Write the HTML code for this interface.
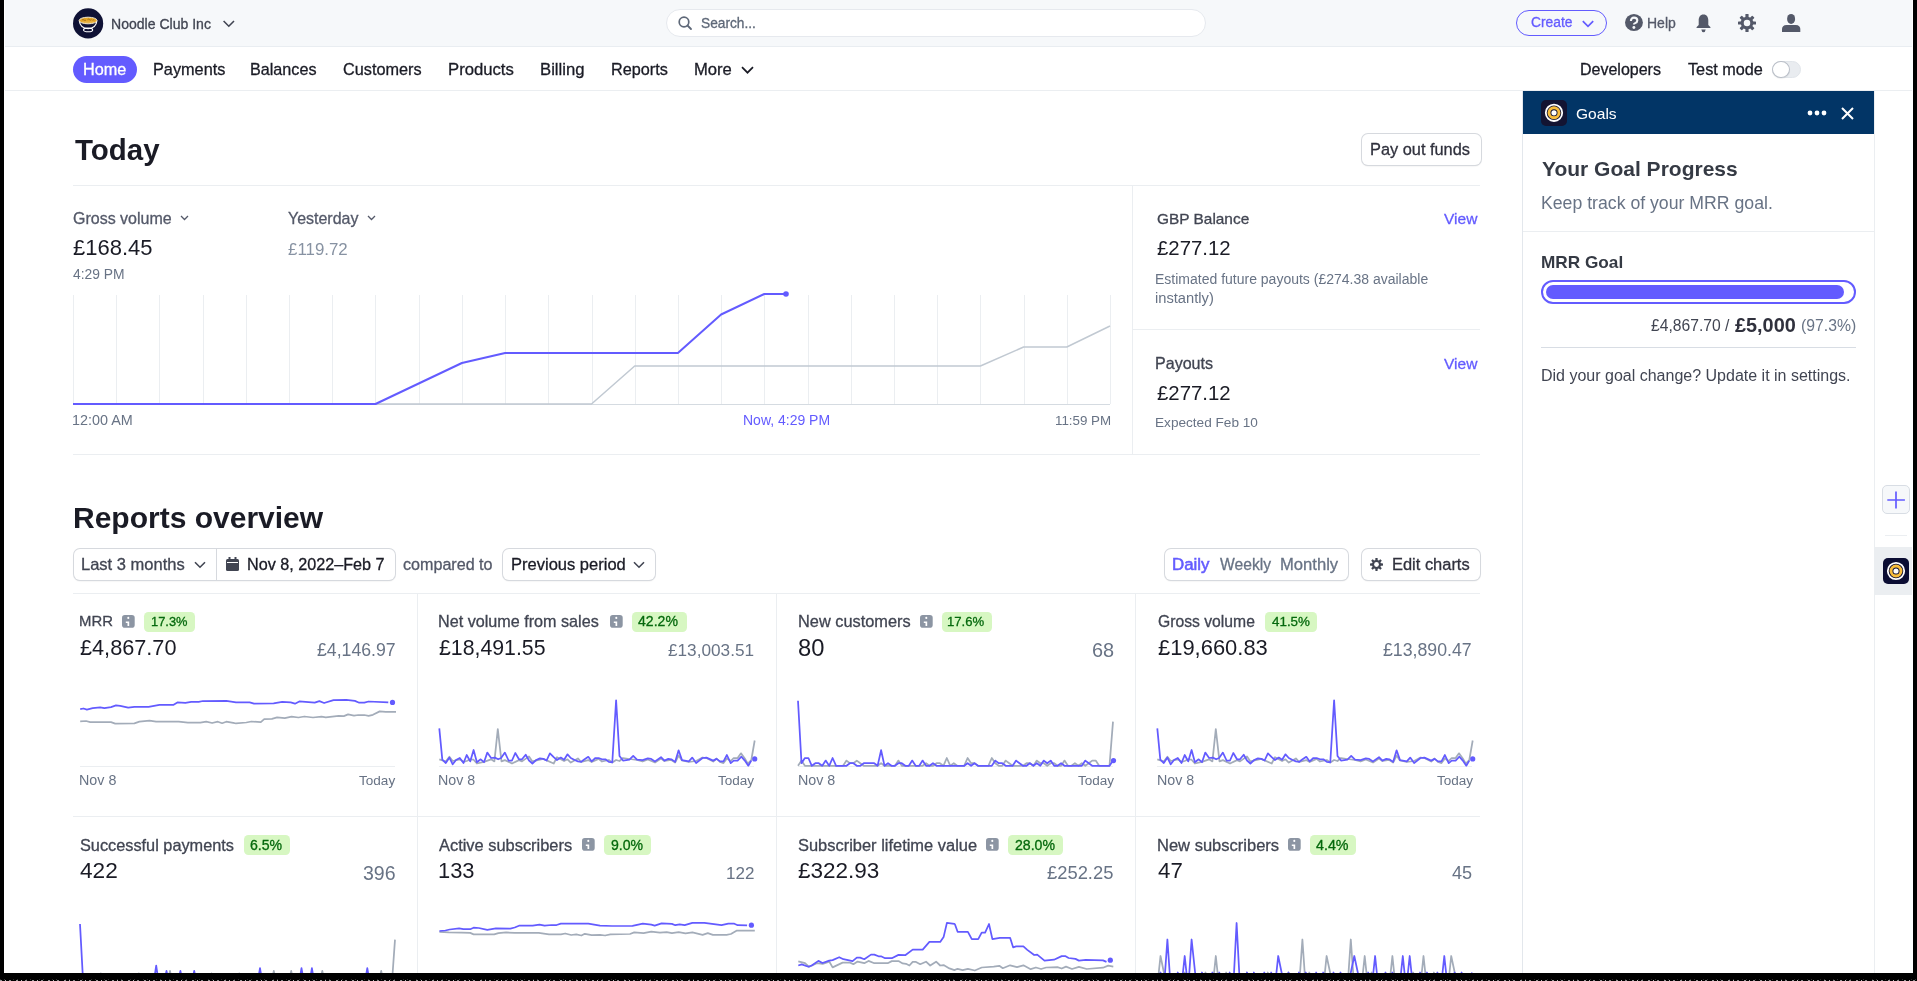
<!DOCTYPE html>
<html><head><meta charset="utf-8">
<style>
*{box-sizing:border-box;margin:0;padding:0}
html,body{width:1917px;height:981px;overflow:hidden;background:#000;font-family:"Liberation Sans",sans-serif;color:#1a1b25}
#app{position:absolute;left:0;top:0;width:1913px;height:973px;background:#fff;overflow:hidden}
.a{position:absolute;white-space:nowrap}
.t{position:absolute;white-space:nowrap;line-height:0;height:0;will-change:transform}
.hl{position:absolute;height:1px;background:#ebeef1}
.vl{position:absolute;width:1px;background:#ebeef1}
svg{position:absolute;overflow:visible}
.bl{display:inline-block;width:0;height:0;vertical-align:baseline}
</style></head><body>
<div id="app">
  <!-- top bar -->
  <div class="a" style="left:5px;top:0;width:1907px;height:46px;background:#f6f8fa"></div>
  <div class="hl" style="left:5px;top:46px;width:1907px;background:#e9edf1"></div>
  <div class="hl" style="left:5px;top:90px;width:1907px;background:#ebeef1"></div>

  <!-- logo -->
  <svg style="left:72.9px;top:8px" width="31" height="31" viewBox="0 0 31 31">
    <circle cx="15.1" cy="15.4" r="15.1" fill="#0f1235"/>
    <path d="M6.3 12.8 Q7.2 20.6 15.1 20.6 Q23 20.6 23.9 12.8" fill="none" stroke="#fff" stroke-width="1.2"/>
    <ellipse cx="15.1" cy="12.5" rx="8.9" ry="3.3" fill="#e5a72a" stroke="#f3ead2" stroke-width="1"/>
    <path d="M9 12 q1 -1 2 0 q1 1 2 0 M14.5 11.6 q1 -1 2 0 q1 1 2 0 M19.5 12.2 q.8 -.8 1.6 0" fill="none" stroke="#8a5a10" stroke-width=".7"/>
    <path d="M9.5 14.2 h11.5" stroke="#f5eedd" stroke-width=".6" stroke-dasharray="1 1"/>
    <ellipse cx="15.1" cy="21.9" rx="4.6" ry="1.8" fill="none" stroke="#fff" stroke-width="1.1"/>
  </svg>
  <svg style="left:222.5px;top:20.3px" width="12" height="8" viewBox="0 0 12 8"><path d="M0.6 1 L5.8 6.2 L11 1" fill="none" stroke="#414552" stroke-width="1.6"/></svg>

  <!-- search -->
  <div class="a" style="left:666px;top:9px;width:540px;height:28px;border:1px solid #e6e9ee;border-radius:14px;background:#fff"></div>
  <svg style="left:678px;top:16px" width="14" height="14" viewBox="0 0 14 14"><circle cx="6" cy="6" r="4.8" fill="none" stroke="#5e6878" stroke-width="1.7"/><path d="M9.5 9.5 L13 13" stroke="#5e6878" stroke-width="1.8" stroke-linecap="round"/></svg>

  <!-- right top -->
  <div class="a" style="left:1516px;top:10px;width:91px;height:26px;border:1px solid #635bff;border-radius:13px"></div>
  <svg style="left:1581.5px;top:19.5px" width="12" height="8" viewBox="0 0 12 8"><path d="M0.8 1.2 L6 6.4 L11.2 1.2" fill="none" stroke="#635bff" stroke-width="1.7"/></svg>
  <svg style="left:1625px;top:14px" width="18" height="18" viewBox="0 0 18 18"><ellipse cx="8.95" cy="8.5" rx="8.95" ry="8.6" fill="#545969"/><path d="M5.9 6.9 C5.9 4.7 7.2 3.6 9 3.6 C10.8 3.6 12.3 4.7 12.3 6.5 C12.3 8.1 11.2 8.7 10.2 9.1 C9.4 9.4 8.9 9.8 8.9 10.6" fill="none" stroke="#f6f8fa" stroke-width="2.1"/><circle cx="8.9" cy="13.5" r="1.45" fill="#f6f8fa"/></svg>
  <svg style="left:1695.5px;top:13.5px" width="15" height="19" viewBox="0 0 15 19"><path d="M7.5 0.6 C10.9 0.6 12.3 3.3 12.3 6.6 V11 L14.3 13 Q14.8 13.5 14.3 14 H0.7 Q0.2 13.5 0.7 13 L2.7 11 V6.6 C2.7 3.3 4.1 0.6 7.5 0.6Z" fill="#545969"/><path d="M5.3 15.6 H9.7 Q9.3 18.3 7.5 18.3 Q5.7 18.3 5.3 15.6Z" fill="#545969"/></svg>
  <svg style="left:1738px;top:14px" width="18" height="18" viewBox="0 0 18 18"><g fill="#545969"><circle cx="9" cy="9" r="6.3"/><rect x="7.4" y="0" width="3.2" height="18" rx=".6"/><rect x="0" y="7.4" width="18" height="3.2" rx=".6"/><rect x="7.4" y="0" width="3.2" height="18" rx=".6" transform="rotate(45 9 9)"/><rect x="7.4" y="0" width="3.2" height="18" rx=".6" transform="rotate(-45 9 9)"/></g><circle cx="9" cy="9" r="3.25" fill="#f6f8fa"/></svg>
  <svg style="left:1782px;top:13px" width="18.5" height="19" viewBox="0 0 18.5 19"><ellipse cx="9.1" cy="5.9" rx="4" ry="5" fill="#545969"/><path d="M0 19 L0 16 Q0 12.2 4.6 11.9 L13.9 11.9 Q18.3 12.2 18.3 16 L18.3 19Z" fill="#545969"/></svg>

  <!-- nav -->
  <div class="a" style="left:73px;top:56px;width:64px;height:27px;border-radius:14px;background:#635bff"></div>
  <svg style="left:741px;top:66px" width="13" height="8" viewBox="0 0 13 8"><path d="M1 1.2 L6.5 6.7 L12 1.2" fill="none" stroke="#1a1b25" stroke-width="1.7"/></svg>
  <div class="a" style="left:1772px;top:61px;width:29px;height:17px;border-radius:9px;background:#e9ecf0;border:1px solid #e1e5ea"></div>
  <div class="a" style="left:1772px;top:61px;width:17.5px;height:17px;border-radius:50%;background:#fff;border:1px solid #b9bec7;box-shadow:0 1px 1px rgba(0,0,0,.06)"></div>

  <!-- TODAY -->
  <div class="a" style="left:1362px;top:134px;width:118.5px;height:30.5px;border-radius:6px;background:#fff;box-shadow:0 0 0 1px #d6d9de,0 1px 1.5px rgba(0,0,0,.16)"></div>
  <div class="hl" style="left:73px;top:185px;width:1407px"></div>
  <div class="vl" style="left:1132px;top:185px;height:269px"></div>
  <div class="hl" style="left:1132px;top:329px;width:348px"></div>
  <div class="hl" style="left:73px;top:454px;width:1407px"></div>
  <svg style="left:180px;top:215px" width="9" height="6" viewBox="0 0 9 6"><path d="M1 1 L4.5 4.5 L8 1" fill="none" stroke="#545969" stroke-width="1.3"/></svg>
  <svg style="left:367px;top:215px" width="9" height="6" viewBox="0 0 9 6"><path d="M1 1 L4.5 4.5 L8 1" fill="none" stroke="#545969" stroke-width="1.3"/></svg>

  <svg id="todaychart" style="left:0;top:0" width="1200" height="460"><line x1="73.5" y1="295" x2="73.5" y2="404" stroke="#ebeef1" stroke-width="1"/>
<line x1="116.5" y1="295" x2="116.5" y2="404" stroke="#ebeef1" stroke-width="1"/>
<line x1="159.5" y1="295" x2="159.5" y2="404" stroke="#ebeef1" stroke-width="1"/>
<line x1="203.5" y1="295" x2="203.5" y2="404" stroke="#ebeef1" stroke-width="1"/>
<line x1="246.5" y1="295" x2="246.5" y2="404" stroke="#ebeef1" stroke-width="1"/>
<line x1="289.5" y1="295" x2="289.5" y2="404" stroke="#ebeef1" stroke-width="1"/>
<line x1="332.5" y1="295" x2="332.5" y2="404" stroke="#ebeef1" stroke-width="1"/>
<line x1="375.5" y1="295" x2="375.5" y2="404" stroke="#ebeef1" stroke-width="1"/>
<line x1="419.5" y1="295" x2="419.5" y2="404" stroke="#ebeef1" stroke-width="1"/>
<line x1="462.5" y1="295" x2="462.5" y2="404" stroke="#ebeef1" stroke-width="1"/>
<line x1="505.5" y1="295" x2="505.5" y2="404" stroke="#ebeef1" stroke-width="1"/>
<line x1="548.5" y1="295" x2="548.5" y2="404" stroke="#ebeef1" stroke-width="1"/>
<line x1="592.5" y1="295" x2="592.5" y2="404" stroke="#ebeef1" stroke-width="1"/>
<line x1="635.5" y1="295" x2="635.5" y2="404" stroke="#ebeef1" stroke-width="1"/>
<line x1="678.5" y1="295" x2="678.5" y2="404" stroke="#ebeef1" stroke-width="1"/>
<line x1="721.5" y1="295" x2="721.5" y2="404" stroke="#ebeef1" stroke-width="1"/>
<line x1="764.5" y1="295" x2="764.5" y2="404" stroke="#ebeef1" stroke-width="1"/>
<line x1="808.5" y1="295" x2="808.5" y2="404" stroke="#ebeef1" stroke-width="1"/>
<line x1="851.5" y1="295" x2="851.5" y2="404" stroke="#ebeef1" stroke-width="1"/>
<line x1="894.5" y1="295" x2="894.5" y2="404" stroke="#ebeef1" stroke-width="1"/>
<line x1="937.5" y1="295" x2="937.5" y2="404" stroke="#ebeef1" stroke-width="1"/>
<line x1="980.5" y1="295" x2="980.5" y2="404" stroke="#ebeef1" stroke-width="1"/>
<line x1="1024.5" y1="295" x2="1024.5" y2="404" stroke="#ebeef1" stroke-width="1"/>
<line x1="1067.5" y1="295" x2="1067.5" y2="404" stroke="#ebeef1" stroke-width="1"/>
<line x1="1110.5" y1="295" x2="1110.5" y2="404" stroke="#ebeef1" stroke-width="1"/>
<line x1="73" y1="404.5" x2="1110" y2="404.5" stroke="#d5dbe1" stroke-width="1"/>
<polyline fill="none" stroke="#c1c9d2" stroke-width="1.5" stroke-linejoin="round" points="73.0,404.0 591.5,404.0 634.7,366.0 980.4,366.0 1023.6,347.0 1066.8,347.0 1110.0,326.0"/>
<polyline fill="none" stroke="#635bff" stroke-width="2" stroke-linejoin="round" points="73.0,404.0 375.5,404.0 461.9,363.0 505.1,353.0 677.9,353.0 721.1,314.5 764.3,294.0 786.0,294.0"/>
<circle cx="786.0" cy="294.0" r="2.8" fill="#635bff"/></svg>

  <!-- REPORTS -->
  <div class="a" style="left:74px;top:549px;width:320.5px;height:30.5px;border-radius:6px;background:#fff;box-shadow:0 0 0 1px #d6d9de,0 1px 1.5px rgba(0,0,0,.16)"></div>
  <div class="vl" style="left:216px;top:549px;height:31px;background:#d6d9de"></div>
  <svg style="left:194px;top:561px" width="12" height="8" viewBox="0 0 12 8"><path d="M1 1.2 L6 6.2 L11 1.2" fill="none" stroke="#414552" stroke-width="1.6"/></svg>
  <svg style="left:226px;top:557px" width="13" height="14" viewBox="0 0 13 14"><rect x="0" y="2" width="13" height="12" rx="1.5" fill="#414552"/><rect x="2.5" y="0" width="2" height="3" fill="#414552"/><rect x="8.5" y="0" width="2" height="3" fill="#414552"/><rect x="1" y="5" width="11" height="1" fill="#fff"/></svg>
  <div class="a" style="left:502.5px;top:549px;width:152px;height:30.5px;border-radius:6px;background:#fff;box-shadow:0 0 0 1px #d6d9de,0 1px 1.5px rgba(0,0,0,.16)"></div>
  <svg style="left:633px;top:561px" width="12" height="8" viewBox="0 0 12 8"><path d="M1 1.2 L6 6.2 L11 1.2" fill="none" stroke="#414552" stroke-width="1.6"/></svg>

  <div class="a" style="left:1165px;top:549px;width:182.5px;height:30.5px;border-radius:6px;background:#fff;box-shadow:0 0 0 1px #d6d9de,0 1px 1.5px rgba(0,0,0,.16)"></div>
  <div class="a" style="left:1361.5px;top:549px;width:118px;height:30.5px;border-radius:6px;background:#fff;box-shadow:0 0 0 1px #d6d9de,0 1px 1.5px rgba(0,0,0,.16)"></div>
  <svg style="left:1370px;top:558px" width="13" height="13" viewBox="0 0 18 18"><g fill="#414552"><circle cx="9" cy="9" r="6.3"/><rect x="7.4" y="0" width="3.2" height="18" rx=".6"/><rect x="0" y="7.4" width="18" height="3.2" rx=".6"/><rect x="7.4" y="0" width="3.2" height="18" rx=".6" transform="rotate(45 9 9)"/><rect x="7.4" y="0" width="3.2" height="18" rx=".6" transform="rotate(-45 9 9)"/></g><circle cx="9" cy="9" r="3.3" fill="#fff"/></svg>

  <div class="hl" style="left:73px;top:593px;width:1407px"></div>
  <div class="hl" style="left:73px;top:816px;width:1407px"></div>
  <div class="vl" style="left:417px;top:593px;height:380px"></div>
  <div class="vl" style="left:776px;top:593px;height:380px"></div>
  <div class="vl" style="left:1135px;top:593px;height:380px"></div>
  
  <svg style="left:610.1px;top:615.0px" width="13" height="13" viewBox="0 0 13 13"><rect x="0" y="0" width="12.7" height="12.7" rx="2.8" fill="#8c95a3"/><circle cx="6.3" cy="2.9" r="1.05" fill="#fff"/><path d="M3.8 6.4 H7.2 V11.1 H5.5 V8 H3.8Z" fill="#fff"/></svg>
<svg style="left:122.0px;top:615.2px" width="13" height="13" viewBox="0 0 13 13"><rect x="0" y="0" width="12.7" height="12.7" rx="2.8" fill="#8c95a3"/><circle cx="6.3" cy="2.9" r="1.05" fill="#fff"/><path d="M3.8 6.4 H7.2 V11.1 H5.5 V8 H3.8Z" fill="#fff"/></svg>
<svg style="left:920.0px;top:615.2px" width="13" height="13" viewBox="0 0 13 13"><rect x="0" y="0" width="12.7" height="12.7" rx="2.8" fill="#8c95a3"/><circle cx="6.3" cy="2.9" r="1.05" fill="#fff"/><path d="M3.8 6.4 H7.2 V11.1 H5.5 V8 H3.8Z" fill="#fff"/></svg>
<svg style="left:582.0px;top:838.3px" width="13" height="13" viewBox="0 0 13 13"><rect x="0" y="0" width="12.7" height="12.7" rx="2.8" fill="#8c95a3"/><circle cx="6.3" cy="2.9" r="1.05" fill="#fff"/><path d="M3.8 6.4 H7.2 V11.1 H5.5 V8 H3.8Z" fill="#fff"/></svg>
<svg style="left:986.2px;top:838.3px" width="13" height="13" viewBox="0 0 13 13"><rect x="0" y="0" width="12.7" height="12.7" rx="2.8" fill="#8c95a3"/><circle cx="6.3" cy="2.9" r="1.05" fill="#fff"/><path d="M3.8 6.4 H7.2 V11.1 H5.5 V8 H3.8Z" fill="#fff"/></svg>
<svg style="left:1288.2px;top:838.3px" width="13" height="13" viewBox="0 0 13 13"><rect x="0" y="0" width="12.7" height="12.7" rx="2.8" fill="#8c95a3"/><circle cx="6.3" cy="2.9" r="1.05" fill="#fff"/><path d="M3.8 6.4 H7.2 V11.1 H5.5 V8 H3.8Z" fill="#fff"/></svg>
<div class="a" style="left:144.0px;top:612.1px;width:50.8px;height:19.8px;border-radius:4.5px;background:#d7f7c2"></div>
<div class="a" style="left:632.0px;top:612.0px;width:54.9px;height:19.8px;border-radius:4.5px;background:#d7f7c2"></div>
<div class="a" style="left:942.0px;top:612.1px;width:49.8px;height:19.8px;border-radius:4.5px;background:#d7f7c2"></div>
<div class="a" style="left:1265.0px;top:612.1px;width:51.6px;height:19.8px;border-radius:4.5px;background:#d7f7c2"></div>
<div class="a" style="left:244.2px;top:835.2px;width:45.6px;height:19.8px;border-radius:4.5px;background:#d7f7c2"></div>
<div class="a" style="left:604.2px;top:835.2px;width:46.5px;height:19.8px;border-radius:4.5px;background:#d7f7c2"></div>
<div class="a" style="left:1008.3px;top:835.2px;width:54.6px;height:19.8px;border-radius:4.5px;background:#d7f7c2"></div>
<div class="a" style="left:1310.1px;top:835.2px;width:45.6px;height:19.8px;border-radius:4.5px;background:#d7f7c2"></div>
<svg id="minicharts" style="left:0;top:0" width="1500" height="973"><line x1="80" y1="766.5" x2="395" y2="766.5" stroke="#ebeef1" stroke-width="1"/>
<line x1="439" y1="766.5" x2="754" y2="766.5" stroke="#ebeef1" stroke-width="1"/>
<line x1="798" y1="766.5" x2="1113" y2="766.5" stroke="#ebeef1" stroke-width="1"/>
<line x1="1157" y1="766.5" x2="1472" y2="766.5" stroke="#ebeef1" stroke-width="1"/>
<polyline fill="none" stroke="#a3acb9" stroke-width="1.75" stroke-linejoin="round" points="80.2,721.3 86.0,721.0 90.2,722.1 111.0,722.1 115.2,723.6 134.4,723.4 139.4,721.7 149.5,720.7 156.1,721.7 178.7,721.6 187.9,722.6 200.4,722.7 206.2,721.7 212.1,723.0 217.9,721.7 222.1,723.2 226.3,721.7 234.6,723.2 236.0,723.3 246.3,722.5 251.4,721.5 260.8,722.1 264.2,719.1 271.9,718.9 277.1,717.4 284.8,718.1 291.6,716.7 298.4,717.5 304.4,716.5 313.0,717.5 321.5,716.7 325.8,717.4 338.7,715.8 343.8,716.1 348.1,714.4 354.0,715.7 358.3,715.0 364.3,715.0 368.6,715.8 372.9,714.8 379.7,711.4 385.7,711.8 396.0,711.8"/>
<polyline fill="none" stroke="#635bff" stroke-width="1.75" stroke-linejoin="round" points="80.2,709.2 83.5,708.5 86.9,709.6 92.7,708.2 100.2,707.4 104.4,708.2 111.0,707.1 116.0,705.4 120.2,705.9 128.2,707.7 134.4,706.9 148.6,706.9 159.5,704.9 173.2,704.9 177.4,702.4 185.4,702.9 191.2,701.9 198.7,701.9 202.9,701.0 226.3,700.9 236.0,702.4 249.7,702.4 254.0,703.7 273.6,703.3 282.2,701.8 290.7,702.4 295.0,703.7 299.3,701.4 314.7,702.7 319.4,701.1 324.1,703.0 333.5,700.1 346.3,699.8 354.9,700.9 359.2,702.7 364.3,702.7 368.6,701.5 388.3,702.4"/>
<circle cx="392.5" cy="702.4" r="2.6" fill="#635bff"/>
<polyline fill="none" stroke="#a3acb9" stroke-width="1.75" stroke-linejoin="round" points="439.3,759.3 445.8,761.5 449.4,756.8 452.7,761.0 459.8,759.3 463.5,761.8 466.7,761.0 470.2,759.3 473.6,759.7 476.9,763.5 484.0,761.8 491.1,759.3 494.4,761.4 497.8,729.2 501.5,761.4 504.9,760.1 512.0,763.5 519.0,760.1 522.0,761.4 529.0,756.4 532.4,761.4 539.9,759.7 543.3,758.9 553.7,763.5 557.0,757.2 564.1,761.0 567.5,759.3 570.8,762.6 577.9,758.4 581.2,762.0 588.3,760.1 591.7,762.0 598.6,758.9 602.0,761.5 608.8,760.0 612.3,762.5 616.1,760.0 619.5,761.0 623.0,758.0 629.4,759.0 637.0,760.0 642.6,761.5 647.8,759.5 655.0,762.5 661.0,758.5 664.4,761.0 671.3,760.0 675.1,762.5 678.6,755.5 682.0,760.5 688.8,762.0 696.1,761.0 702.5,757.5 706.4,758.0 713.2,761.5 716.6,758.5 720.0,762.0 723.5,763.1 726.9,758.5 730.7,761.0 733.7,758.0 737.6,758.0 741.0,753.3 744.8,758.5 747.8,763.6 751.3,760.0 754.7,740.5"/>
<polyline fill="none" stroke="#635bff" stroke-width="1.75" stroke-linejoin="round" points="439.3,728.4 442.3,759.7 445.8,763.0 449.4,757.6 452.7,764.3 456.0,760.0 459.8,758.0 463.5,763.0 466.7,755.0 470.2,761.4 473.6,750.0 476.9,762.2 480.7,759.3 484.0,762.2 487.3,752.6 491.1,758.0 494.8,757.6 498.2,759.3 501.1,758.0 504.9,752.6 508.6,760.5 512.0,760.5 515.3,753.0 519.0,759.3 522.0,759.3 525.7,754.7 529.0,760.5 532.4,763.5 536.2,760.0 539.9,758.4 543.3,758.9 546.6,760.5 549.9,753.4 553.7,757.2 557.0,760.0 560.8,757.6 564.1,759.7 567.5,754.3 570.8,758.0 574.6,760.0 577.9,761.4 581.2,761.8 584.6,759.3 588.3,756.8 591.7,761.4 595.4,758.0 598.6,758.0 602.0,759.3 605.4,759.3 608.8,761.9 612.3,762.3 616.1,700.3 619.5,755.9 623.0,760.6 629.4,759.7 633.2,755.9 637.0,759.7 642.6,760.1 647.8,758.4 651.2,758.9 655.0,761.4 661.0,757.2 664.4,760.6 668.3,758.9 671.3,759.3 675.1,761.9 678.6,750.3 682.0,760.1 688.8,761.4 692.2,757.6 696.1,763.1 702.5,758.0 706.4,757.6 713.2,760.6 716.6,758.9 720.0,761.4 723.5,761.4 726.9,755.0 730.7,763.1 733.7,760.6 737.6,760.6 741.4,756.7 744.8,760.6 748.3,765.7 751.3,760.6"/>
<circle cx="754.7" cy="758.9" r="2.6" fill="#635bff"/>
<polyline fill="none" stroke="#a3acb9" stroke-width="1.75" stroke-linejoin="round" points="1157.3,759.3 1163.8,761.5 1167.4,756.8 1170.7,761.0 1177.8,759.3 1181.5,761.8 1184.7,761.0 1188.2,759.3 1191.6,759.7 1194.9,763.5 1202.0,761.8 1209.1,759.3 1212.4,761.4 1215.8,729.2 1219.5,761.4 1222.9,760.1 1230.0,763.5 1237.0,760.1 1240.0,761.4 1247.0,756.4 1250.4,761.4 1257.9,759.7 1261.3,758.9 1271.7,763.5 1275.0,757.2 1282.1,761.0 1285.5,759.3 1288.8,762.6 1295.9,758.4 1299.2,762.0 1306.3,760.1 1309.7,762.0 1316.6,758.9 1320.0,761.5 1326.8,760.0 1330.3,762.5 1334.1,760.0 1337.5,761.0 1341.0,758.0 1347.4,759.0 1355.0,760.0 1360.6,761.5 1365.8,759.5 1373.0,762.5 1379.0,758.5 1382.4,761.0 1389.3,760.0 1393.1,762.5 1396.6,755.5 1400.0,760.5 1406.8,762.0 1414.1,761.0 1420.5,757.5 1424.4,758.0 1431.2,761.5 1434.6,758.5 1438.0,762.0 1441.5,763.1 1444.9,758.5 1448.7,761.0 1451.7,758.0 1455.6,758.0 1459.0,753.3 1462.8,758.5 1465.8,763.6 1469.3,760.0 1472.7,740.5"/>
<polyline fill="none" stroke="#635bff" stroke-width="1.75" stroke-linejoin="round" points="1157.3,728.4 1160.3,759.7 1163.8,763.0 1167.4,757.6 1170.7,764.3 1174.0,760.0 1177.8,758.0 1181.5,763.0 1184.7,755.0 1188.2,761.4 1191.6,750.0 1194.9,762.2 1198.7,759.3 1202.0,762.2 1205.3,752.6 1209.1,758.0 1212.8,757.6 1216.2,759.3 1219.1,758.0 1222.9,752.6 1226.6,760.5 1230.0,760.5 1233.3,753.0 1237.0,759.3 1240.0,759.3 1243.7,754.7 1247.0,760.5 1250.4,763.5 1254.2,760.0 1257.9,758.4 1261.3,758.9 1264.6,760.5 1267.9,753.4 1271.7,757.2 1275.0,760.0 1278.8,757.6 1282.1,759.7 1285.5,754.3 1288.8,758.0 1292.6,760.0 1295.9,761.4 1299.2,761.8 1302.6,759.3 1306.3,756.8 1309.7,761.4 1313.4,758.0 1316.6,758.0 1320.0,759.3 1323.4,759.3 1326.8,761.9 1330.3,762.3 1334.1,700.3 1337.5,755.9 1341.0,760.6 1347.4,759.7 1351.2,755.9 1355.0,759.7 1360.6,760.1 1365.8,758.4 1369.2,758.9 1373.0,761.4 1379.0,757.2 1382.4,760.6 1386.3,758.9 1389.3,759.3 1393.1,761.9 1396.6,750.3 1400.0,760.1 1406.8,761.4 1410.2,757.6 1414.1,763.1 1420.5,758.0 1424.4,757.6 1431.2,760.6 1434.6,758.9 1438.0,761.4 1441.5,761.4 1444.9,755.0 1448.7,763.1 1451.7,760.6 1455.6,760.6 1459.4,756.7 1462.8,760.6 1466.3,765.7 1469.3,760.6"/>
<circle cx="1472.7" cy="758.9" r="2.6" fill="#635bff"/>
<polyline fill="none" stroke="#a3acb9" stroke-width="1.75" stroke-linejoin="round" points="798.0,765.8 801.5,760.6 804.9,765.8 808.4,765.8 811.8,765.8 815.3,765.8 818.8,765.8 822.2,765.8 825.7,765.8 829.2,765.8 832.6,765.8 836.1,765.8 839.5,765.8 843.0,765.8 846.5,760.6 849.9,763.2 853.4,763.2 856.8,760.6 860.3,763.2 863.8,765.8 867.2,765.8 870.7,765.8 874.2,765.8 877.6,765.8 881.1,763.2 884.5,765.8 888.0,765.8 891.5,765.8 894.9,765.8 898.4,760.6 901.8,765.8 905.3,765.8 908.8,765.8 912.2,765.8 915.7,765.8 919.2,765.8 922.6,765.8 926.1,763.2 929.5,765.8 933.0,765.8 936.5,763.2 939.9,763.2 943.4,765.8 946.8,758.0 950.3,765.8 953.8,763.2 957.2,765.8 960.7,765.8 964.2,765.8 967.6,758.0 971.1,763.2 974.5,763.2 978.0,765.8 981.5,765.8 984.9,765.8 988.4,765.8 991.8,758.0 995.3,763.2 998.8,765.8 1002.2,765.8 1005.7,760.6 1009.2,763.2 1012.6,765.8 1016.1,765.8 1019.5,765.8 1023.0,765.8 1026.5,763.2 1029.9,763.2 1033.4,765.8 1036.8,760.6 1040.3,763.2 1043.8,763.2 1047.2,765.8 1050.7,763.2 1054.2,763.2 1057.6,765.8 1061.1,765.8 1064.5,760.6 1068.0,765.8 1071.5,765.8 1074.9,763.2 1078.4,765.8 1081.8,763.2 1085.3,765.8 1088.8,763.2 1092.2,760.6 1095.7,760.6 1099.2,765.8 1102.6,765.8 1106.1,765.8 1109.5,765.8 1113.0,721.6"/>
<polyline fill="none" stroke="#635bff" stroke-width="1.75" stroke-linejoin="round" points="798.0,700.8 801.5,763.2 804.9,758.0 808.4,758.0 811.8,765.8 815.3,763.2 818.8,763.2 822.2,765.8 825.7,760.6 829.2,765.8 832.6,758.0 836.1,765.8 839.5,765.8 843.0,765.8 846.5,765.8 849.9,763.2 853.4,763.2 856.8,765.8 860.3,765.8 863.8,763.2 867.2,763.2 870.7,763.2 874.2,763.2 877.6,765.8 881.1,750.2 884.5,765.8 888.0,763.2 891.5,765.8 894.9,765.8 898.4,763.2 901.8,763.2 905.3,765.8 908.8,765.8 912.2,760.6 915.7,765.8 919.2,765.8 922.6,760.6 926.1,765.8 929.5,765.8 933.0,763.2 936.5,765.8 939.9,765.8 943.4,765.8 946.8,765.8 950.3,765.8 953.8,765.8 957.2,765.8 960.7,765.8 964.2,765.8 967.6,763.2 971.1,765.8 974.5,763.2 978.0,765.8 981.5,765.8 984.9,765.8 988.4,765.8 991.8,765.8 995.3,760.6 998.8,763.2 1002.2,763.2 1005.7,765.8 1009.2,765.8 1012.6,765.8 1016.1,760.6 1019.5,763.2 1023.0,765.8 1026.5,765.8 1029.9,763.2 1033.4,765.8 1036.8,763.2 1040.3,765.8 1043.8,760.6 1047.2,763.2 1050.7,760.6 1054.2,765.8 1057.6,765.8 1061.1,763.2 1064.5,765.8 1068.0,765.8 1071.5,765.8 1074.9,765.8 1078.4,765.8 1081.8,765.8 1085.3,760.6 1088.8,763.2 1092.2,765.8 1095.7,765.8 1099.2,765.8 1102.6,765.8 1106.1,765.8 1109.5,765.8 1113.0,760.6"/>
<circle cx="1113.5" cy="760.6" r="2.6" fill="#635bff"/>
<polyline fill="none" stroke="#a3acb9" stroke-width="1.75" stroke-linejoin="round" points="80.0,989.0 83.5,989.0 86.9,989.0 90.4,989.0 93.8,989.0 97.3,989.0 100.8,973.4 104.2,989.0 107.7,989.0 111.2,989.0 114.6,989.0 118.1,989.0 121.5,989.0 125.0,989.0 128.5,989.0 131.9,989.0 135.4,989.0 138.8,973.4 142.3,989.0 145.8,989.0 149.2,989.0 152.7,989.0 156.2,989.0 159.6,989.0 163.1,989.0 166.5,989.0 170.0,970.8 173.5,989.0 176.9,989.0 180.4,989.0 183.8,989.0 187.3,989.0 190.8,989.0 194.2,989.0 197.7,989.0 201.2,989.0 204.6,989.0 208.1,989.0 211.5,973.4 215.0,989.0 218.5,989.0 221.9,989.0 225.4,989.0 228.8,989.0 232.3,989.0 235.8,989.0 239.2,973.4 242.7,989.0 246.2,989.0 249.6,989.0 253.1,989.0 256.5,989.0 260.0,989.0 263.5,989.0 266.9,989.0 270.4,989.0 273.8,970.8 277.3,989.0 280.8,989.0 284.2,989.0 287.7,989.0 291.2,970.8 294.6,989.0 298.1,989.0 301.5,989.0 305.0,989.0 308.5,989.0 311.9,989.0 315.4,989.0 318.8,989.0 322.3,970.8 325.8,989.0 329.2,989.0 332.7,989.0 336.2,989.0 339.6,989.0 343.1,989.0 346.5,989.0 350.0,989.0 353.5,989.0 356.9,989.0 360.4,989.0 363.8,989.0 367.3,989.0 370.8,989.0 374.2,989.0 377.7,989.0 381.2,970.8 384.6,989.0 388.1,989.0 391.5,989.0 395.0,939.6"/>
<polyline fill="none" stroke="#635bff" stroke-width="1.75" stroke-linejoin="round" points="80.0,924.0 83.5,989.0 86.9,989.0 90.4,989.0 93.8,989.0 97.3,989.0 100.8,989.0 104.2,989.0 107.7,989.0 111.2,989.0 114.6,989.0 118.1,989.0 121.5,986.4 125.0,989.0 128.5,989.0 131.9,989.0 135.4,989.0 138.8,989.0 142.3,989.0 145.8,989.0 149.2,989.0 152.7,989.0 156.2,965.6 159.6,989.0 163.1,989.0 166.5,970.8 170.0,989.0 173.5,989.0 176.9,989.0 180.4,970.8 183.8,989.0 187.3,989.0 190.8,989.0 194.2,970.8 197.7,989.0 201.2,989.0 204.6,989.0 208.1,989.0 211.5,989.0 215.0,989.0 218.5,989.0 221.9,989.0 225.4,989.0 228.8,986.4 232.3,989.0 235.8,989.0 239.2,989.0 242.7,989.0 246.2,989.0 249.6,989.0 253.1,989.0 256.5,989.0 260.0,968.2 263.5,989.0 266.9,989.0 270.4,989.0 273.8,989.0 277.3,989.0 280.8,989.0 284.2,989.0 287.7,989.0 291.2,989.0 294.6,989.0 298.1,989.0 301.5,968.2 305.0,989.0 308.5,989.0 311.9,968.2 315.4,989.0 318.8,989.0 322.3,989.0 325.8,989.0 329.2,989.0 332.7,989.0 336.2,989.0 339.6,989.0 343.1,989.0 346.5,989.0 350.0,986.4 353.5,989.0 356.9,989.0 360.4,989.0 363.8,989.0 367.3,968.2 370.8,989.0 374.2,989.0 377.7,989.0 381.2,989.0 384.6,989.0 388.1,989.0 391.5,989.0 395.0,989.0"/>
<polyline fill="none" stroke="#a3acb9" stroke-width="1.75" stroke-linejoin="round" points="439.4,931.8 448.8,932.4 461.7,932.7 470.2,932.9 473.6,934.4 494.2,934.4 498.4,933.1 506.1,932.4 514.7,932.9 538.7,932.9 549.0,934.4 560.9,934.4 565.2,933.5 571.2,935.0 576.3,934.4 581.4,935.5 584.8,933.8 591.7,935.2 600.0,934.8 605.1,935.5 610.3,934.4 630.0,934.0 634.2,932.4 643.6,933.1 651.3,931.6 659.9,932.7 666.7,932.1 671.9,933.1 678.7,932.2 685.5,933.3 692.4,932.4 702.6,934.8 707.8,933.1 712.9,934.8 726.6,934.8 730.9,934.0 736.9,930.5 754.8,930.5"/>
<polyline fill="none" stroke="#635bff" stroke-width="1.75" stroke-linejoin="round" points="439.4,931.0 445.4,930.5 449.7,929.5 459.1,928.4 463.4,929.2 470.2,929.2 473.6,927.7 478.8,928.0 487.3,929.8 495.9,928.4 510.4,928.6 514.7,927.5 519.0,925.7 532.7,925.7 539.5,924.7 544.6,925.7 551.5,925.0 556.6,925.0 560.9,923.7 588.3,923.7 600.0,925.7 612.0,926.0 632.5,925.8 642.8,923.7 651.3,924.7 654.7,925.6 661.6,923.4 671.9,923.9 675.3,925.2 679.6,924.4 684.7,925.2 692.4,922.8 704.4,922.8 721.5,925.2 728.3,923.7 734.3,923.7 737.7,925.2 747.1,925.4"/>
<circle cx="751.4" cy="925.2" r="2.6" fill="#635bff"/>
<polyline fill="none" stroke="#a3acb9" stroke-width="1.75" stroke-linejoin="round" points="798.3,961.3 805.0,963.2 809.2,966.8 816.9,963.2 822.7,963.8 829.4,961.7 832.6,967.4 842.6,962.6 850.1,962.6 853.4,964.2 857.6,961.6 864.3,963.2 868.5,960.9 874.3,963.2 887.7,963.2 891.8,961.1 898.5,961.1 902.7,963.4 906.0,963.8 909.4,965.5 912.7,961.9 916.0,961.9 920.2,964.2 926.0,961.7 930.2,965.5 936.1,961.7 940.2,965.5 943.6,965.1 949.4,968.4 954.4,970.1 957.6,968.8 962.7,970.1 967.9,968.8 974.8,970.5 981.7,967.5 993.7,966.6 999.3,965.8 1002.8,968.2 1010.1,965.3 1017.0,967.1 1023.4,965.3 1030.7,969.2 1035.9,967.5 1041.1,969.0 1046.2,967.5 1057.4,967.1 1061.7,968.5 1066.0,966.6 1072.0,969.0 1078.9,966.8 1086.7,969.0 1103.0,967.7 1108.2,965.6 1113.3,966.6"/>
<polyline fill="none" stroke="#635bff" stroke-width="1.75" stroke-linejoin="round" points="798.3,965.5 801.7,964.4 808.4,966.8 811.7,965.5 818.4,960.9 822.5,963.0 829.2,960.7 832.6,960.1 839.2,957.2 843.4,959.2 852.6,961.1 856.8,957.6 860.1,957.6 864.3,959.2 871.0,954.6 874.3,954.6 878.5,956.3 881.0,956.3 885.1,958.2 891.8,958.2 898.5,954.9 905.2,955.2 912.7,949.6 922.7,949.6 929.4,941.9 940.2,941.9 943.6,937.1 946.9,922.9 954.4,923.8 955.0,924.5 957.6,931.8 967.9,931.8 971.8,939.1 978.2,939.1 981.7,932.6 985.1,932.6 989.0,924.0 992.4,939.1 999.8,937.8 1010.1,937.8 1013.1,947.3 1016.1,946.4 1023.4,946.4 1027.3,949.9 1034.2,955.0 1037.2,954.6 1044.5,960.6 1054.0,959.7 1061.7,956.1 1065.2,956.1 1068.6,958.0 1075.5,958.9 1078.9,960.6 1085.8,959.9 1103.0,960.4 1106.5,961.9"/>
<circle cx="1110.3" cy="960.2" r="2.6" fill="#635bff"/>
<polyline fill="none" stroke="#a3acb9" stroke-width="1.75" stroke-linejoin="round" points="1157.0,989.0 1160.5,956.0 1163.9,972.5 1167.4,989.0 1170.8,989.0 1174.3,989.0 1177.8,989.0 1181.2,989.0 1184.7,972.5 1188.2,989.0 1191.6,989.0 1195.1,989.0 1198.5,989.0 1202.0,989.0 1205.5,972.5 1208.9,989.0 1212.4,989.0 1215.8,956.0 1219.3,989.0 1222.8,989.0 1226.2,972.5 1229.7,989.0 1233.2,989.0 1236.6,989.0 1240.1,989.0 1243.5,989.0 1247.0,972.5 1250.5,989.0 1253.9,989.0 1257.4,989.0 1260.8,989.0 1264.3,989.0 1267.8,972.5 1271.2,989.0 1274.7,989.0 1278.2,989.0 1281.6,989.0 1285.1,989.0 1288.5,972.5 1292.0,989.0 1295.5,989.0 1298.9,989.0 1302.4,939.5 1305.8,989.0 1309.3,972.5 1312.8,989.0 1316.2,989.0 1319.7,989.0 1323.2,989.0 1326.6,956.0 1330.1,972.5 1333.5,989.0 1337.0,989.0 1340.5,989.0 1343.9,989.0 1347.4,989.0 1350.8,939.5 1354.3,989.0 1357.8,989.0 1361.2,989.0 1364.7,956.0 1368.2,989.0 1371.6,972.5 1375.1,989.0 1378.5,989.0 1382.0,989.0 1385.5,989.0 1388.9,989.0 1392.4,956.0 1395.8,989.0 1399.3,989.0 1402.8,989.0 1406.2,989.0 1409.7,989.0 1413.2,972.5 1416.6,989.0 1420.1,989.0 1423.5,956.0 1427.0,989.0 1430.5,989.0 1433.9,972.5 1437.4,989.0 1440.8,989.0 1444.3,989.0 1447.8,989.0 1451.2,956.0 1454.7,972.5 1458.2,989.0 1461.6,989.0 1465.1,989.0 1468.5,989.0 1472.0,989.0"/>
<polyline fill="none" stroke="#635bff" stroke-width="1.75" stroke-linejoin="round" points="1157.0,989.0 1160.5,972.5 1163.9,989.0 1167.4,939.5 1170.8,989.0 1174.3,989.0 1177.8,972.5 1181.2,989.0 1184.7,956.0 1188.2,989.0 1191.6,939.5 1195.1,972.5 1198.5,989.0 1202.0,972.5 1205.5,989.0 1208.9,989.0 1212.4,972.5 1215.8,989.0 1219.3,972.5 1222.8,989.0 1226.2,989.0 1229.7,972.5 1233.2,989.0 1236.6,923.0 1240.1,989.0 1243.5,989.0 1247.0,972.5 1250.5,989.0 1253.9,972.5 1257.4,989.0 1260.8,989.0 1264.3,972.5 1267.8,989.0 1271.2,972.5 1274.7,989.0 1278.2,956.0 1281.6,972.5 1285.1,989.0 1288.5,972.5 1292.0,989.0 1295.5,989.0 1298.9,972.5 1302.4,989.0 1305.8,972.5 1309.3,989.0 1312.8,989.0 1316.2,972.5 1319.7,989.0 1323.2,972.5 1326.6,989.0 1330.1,989.0 1333.5,972.5 1337.0,989.0 1340.5,972.5 1343.9,989.0 1347.4,989.0 1350.8,972.5 1354.3,956.0 1357.8,972.5 1361.2,989.0 1364.7,989.0 1368.2,972.5 1371.6,989.0 1375.1,956.0 1378.5,989.0 1382.0,989.0 1385.5,972.5 1388.9,989.0 1392.4,972.5 1395.8,989.0 1399.3,989.0 1402.8,956.0 1406.2,989.0 1409.7,956.0 1413.2,989.0 1416.6,989.0 1420.1,972.5 1423.5,989.0 1427.0,972.5 1430.5,989.0 1433.9,989.0 1437.4,972.5 1440.8,989.0 1444.3,956.0 1447.8,989.0 1451.2,989.0 1454.7,972.5 1458.2,989.0 1461.6,972.5 1465.1,989.0 1468.5,989.0 1472.0,972.5"/></svg>

  <!-- GOALS PANEL -->
  <div class="vl" style="left:1522px;top:91px;height:882px;background:#e3e7ec"></div>
  <div class="vl" style="left:1874px;top:91px;height:882px;background:#ebeef1"></div>
  <div class="a" style="left:1523px;top:91px;width:351px;height:43px;background:#023566"></div>
  <svg style="left:1541px;top:100px" width="26" height="26" viewBox="0 0 26 26"><rect width="26" height="26" rx="5" fill="#131432"/><circle cx="13" cy="12.8" r="8.2" fill="none" stroke="#fff" stroke-width="1.8"/><circle cx="13" cy="12.8" r="5" fill="none" stroke="#f8bd3c" stroke-width="2.9"/><circle cx="13" cy="12.8" r="2.6" fill="#fff"/></svg>
  <svg style="left:1807px;top:110px" width="20" height="6" viewBox="0 0 20 6"><circle cx="3" cy="3" r="2.4" fill="#fff"/><circle cx="10" cy="3" r="2.4" fill="#fff"/><circle cx="17" cy="3" r="2.4" fill="#fff"/></svg>
  <svg style="left:1841px;top:107px" width="13" height="13" viewBox="0 0 13 13"><path d="M1 1 L12 12 M12 1 L1 12" stroke="#fff" stroke-width="2"/></svg>
  <div class="hl" style="left:1523px;top:231px;width:351px"></div>
  <div class="a" style="left:1541px;top:280px;width:315px;height:24px;border-radius:12px;border:2.5px solid #635bff;background:#fff"></div>
  <div class="a" style="left:1546px;top:285px;width:298px;height:14px;border-radius:7px;background:#635bff"></div>
  <div class="hl" style="left:1541px;top:347px;width:315px;background:#d8dde4"></div>

  <!-- right rail -->
  <div class="a" style="left:1882px;top:485px;width:28px;height:29px;border-radius:5px;border:1px solid #d8dde4;background:#f6f8fa"></div>
  <svg style="left:1887px;top:490.5px" width="18" height="18" viewBox="0 0 18 18"><path d="M9 0.6 V17.4 M0.3 9 H17.9" stroke="#635bff" stroke-width="1.7"/></svg>
  <div class="hl" style="left:1885px;top:535px;width:22px"></div>
  <div class="a" style="left:1875px;top:547px;width:37px;height:48px;background:#ebeef1"></div>
  <svg style="left:1883px;top:558px" width="26" height="26" viewBox="0 0 26 26"><rect width="26" height="26" rx="5" fill="#0b0d33"/><circle cx="13" cy="13" r="8.2" fill="none" stroke="#fff" stroke-width="1.8"/><circle cx="13" cy="13" r="5" fill="none" stroke="#f8bd3c" stroke-width="2.9"/><circle cx="13" cy="13" r="2.6" fill="#fff"/></svg>

<div class="t" id="noodle" style="left:111.40px;top:24.00px;font-size:14.06px;color:#414552;-webkit-text-stroke:0.3px #414552"><i class="bl"></i>Noodle Club Inc</div>
<div class="t" id="search" style="left:701.40px;top:24.00px;font-size:13.72px;color:#5e6878;-webkit-text-stroke:0.3px #5e6878"><i class="bl"></i>Search...</div>
<div class="t" id="create" style="left:1530.50px;top:22.00px;font-size:13.82px;color:#635bff;-webkit-text-stroke:0.3px #635bff"><i class="bl"></i>Create</div>
<div class="t" id="help" style="left:1647.00px;top:23.00px;font-size:13.99px;color:#545969;-webkit-text-stroke:0.3px #545969"><i class="bl"></i>Help</div>
<div class="t" id="home" style="left:83.20px;top:69.00px;font-size:16.25px;color:#fff;-webkit-text-stroke:0.3px #fff"><i class="bl"></i>Home</div>
<div class="t" id="payments" style="left:152.60px;top:69.00px;font-size:16.29px;color:#1a1b25;-webkit-text-stroke:0.3px #1a1b25"><i class="bl"></i>Payments</div>
<div class="t" id="balances" style="left:249.80px;top:69.00px;font-size:16.17px;color:#1a1b25;-webkit-text-stroke:0.3px #1a1b25"><i class="bl"></i>Balances</div>
<div class="t" id="customers" style="left:343.40px;top:69.00px;font-size:16.25px;color:#1a1b25;-webkit-text-stroke:0.3px #1a1b25"><i class="bl"></i>Customers</div>
<div class="t" id="products" style="left:447.80px;top:70.00px;font-size:16.70px;color:#1a1b25;-webkit-text-stroke:0.3px #1a1b25"><i class="bl"></i>Products</div>
<div class="t" id="billing" style="left:539.80px;top:70.00px;font-size:16.69px;color:#1a1b25;-webkit-text-stroke:0.3px #1a1b25"><i class="bl"></i>Billing</div>
<div class="t" id="reports" style="left:611.20px;top:69.00px;font-size:16.24px;color:#1a1b25;-webkit-text-stroke:0.3px #1a1b25"><i class="bl"></i>Reports</div>
<div class="t" id="more" style="left:694.00px;top:70.00px;font-size:16.61px;color:#1a1b25;-webkit-text-stroke:0.3px #1a1b25"><i class="bl"></i>More</div>
<div class="t" id="developers" style="left:1580.00px;top:70.00px;font-size:16.00px;color:#1a1b25;-webkit-text-stroke:0.3px #1a1b25"><i class="bl"></i>Developers</div>
<div class="t" id="testmode" style="left:1688.40px;top:69.00px;font-size:16.24px;color:#1a1b25;-webkit-text-stroke:0.3px #1a1b25"><i class="bl"></i>Test mode</div>
<div class="t" id="today" style="left:74.60px;top:150.00px;font-size:29.48px;color:#1a1b25;font-weight:bold"><i class="bl"></i>Today</div>
<div class="t" id="grossvol" style="left:73.40px;top:219.00px;font-size:16.00px;color:#545969;-webkit-text-stroke:0.3px #545969"><i class="bl"></i>Gross volume</div>
<div class="t" id="v168" style="left:73.40px;top:248.00px;font-size:22.00px;color:#1a1b25"><i class="bl"></i>£168.45</div>
<div class="t" id="t429" style="left:73.40px;top:274.00px;font-size:13.86px;color:#687385"><i class="bl"></i>4:29 PM</div>
<div class="t" id="yesterday" style="left:287.60px;top:219.00px;font-size:15.96px;color:#545969;-webkit-text-stroke:0.3px #545969"><i class="bl"></i>Yesterday</div>
<div class="t" id="v119" style="left:287.60px;top:250.00px;font-size:16.89px;color:#8792a2"><i class="bl"></i>£119.72</div>
<div class="t" id="gbp" style="left:1156.60px;top:219.00px;font-size:15.41px;color:#414552;-webkit-text-stroke:0.3px #414552"><i class="bl"></i>GBP Balance</div>
<div class="t" id="view1" style="left:1444.40px;top:219.00px;font-size:15.56px;color:#635bff;-webkit-text-stroke:0.3px #635bff"><i class="bl"></i>View</div>
<div class="t" id="v277a" style="left:1156.60px;top:248.00px;font-size:20.38px;color:#1a1b25"><i class="bl"></i>£277.12</div>
<div class="t" id="est" style="left:1154.60px;top:279.00px;font-size:14.00px;color:#687385"><i class="bl"></i>Estimated future payouts (£274.38 available</div>
<div class="t" id="instantly" style="left:1154.60px;top:298.00px;font-size:14.69px;color:#687385"><i class="bl"></i>instantly)</div>
<div class="t" id="payouts" style="left:1154.60px;top:363.00px;font-size:16.07px;color:#414552;-webkit-text-stroke:0.3px #414552"><i class="bl"></i>Payouts</div>
<div class="t" id="view2" style="left:1444.40px;top:364.00px;font-size:15.56px;color:#635bff;-webkit-text-stroke:0.3px #635bff"><i class="bl"></i>View</div>
<div class="t" id="v277b" style="left:1156.60px;top:393.00px;font-size:20.38px;color:#1a1b25"><i class="bl"></i>£277.12</div>
<div class="t" id="expected" style="left:1154.60px;top:423.00px;font-size:13.61px;color:#687385"><i class="bl"></i>Expected Feb 10</div>
<div class="t" id="payout" style="left:1370.40px;top:149.00px;font-size:16.35px;color:#30313d;-webkit-text-stroke:0.3px #30313d"><i class="bl"></i>Pay out funds</div>
<div class="t" id="t12" style="left:71.80px;top:420.00px;font-size:14.38px;color:#687385"><i class="bl"></i>12:00 AM</div>
<div class="t" id="tnow" style="left:742.80px;top:420.00px;font-size:13.99px;color:#635bff"><i class="bl"></i>Now, 4:29 PM</div>
<div class="t" id="t1159" style="left:1054.80px;top:421.00px;font-size:13.35px;color:#687385"><i class="bl"></i>11:59 PM</div>
<div class="t" id="reports_h" style="left:72.80px;top:518.00px;font-size:30.00px;color:#1a1b25;font-weight:bold"><i class="bl"></i>Reports overview</div>
<div class="t" id="last3" style="left:81.00px;top:564.00px;font-size:16.51px;color:#414552;-webkit-text-stroke:0.3px #414552"><i class="bl"></i>Last 3 months</div>
<div class="t" id="nov8range" style="left:247.00px;top:564.00px;font-size:16.18px;color:#1a1b25;-webkit-text-stroke:0.3px #1a1b25"><i class="bl"></i>Nov 8, 2022–Feb 7</div>
<div class="t" id="compared" style="left:403.00px;top:564.00px;font-size:16.12px;color:#545969;-webkit-text-stroke:0.3px #545969"><i class="bl"></i>compared to</div>
<div class="t" id="prevperiod" style="left:510.60px;top:565.00px;font-size:16.52px;color:#1a1b25;-webkit-text-stroke:0.3px #1a1b25"><i class="bl"></i>Previous period</div>
<div class="t" id="daily" style="left:1172.00px;top:565.00px;font-size:16.87px;color:#635bff;-webkit-text-stroke:0.55px #635bff"><i class="bl"></i>Daily</div>
<div class="t" id="weekly" style="left:1219.60px;top:565.00px;font-size:15.65px;color:#687385;-webkit-text-stroke:0.3px #687385"><i class="bl"></i>Weekly</div>
<div class="t" id="monthly" style="left:1280.40px;top:565.00px;font-size:16.63px;color:#687385;-webkit-text-stroke:0.3px #687385"><i class="bl"></i>Monthly</div>
<div class="t" id="editcharts" style="left:1392.00px;top:564.00px;font-size:16.45px;color:#30313d;-webkit-text-stroke:0.3px #30313d"><i class="bl"></i>Edit charts</div>
<div class="t" id="mrr_title" style="left:79.20px;top:621.00px;font-size:14.88px;color:#414552;-webkit-text-stroke:0.3px #414552"><i class="bl"></i>MRR</div>
<div class="t" id="mrr_badge" style="left:151.00px;top:622.00px;font-size:12.86px;color:#05690d;-webkit-text-stroke:0.3px #05690d"><i class="bl"></i>17.3%</div>
<div class="t" id="mrr_val" style="left:80.20px;top:648.00px;font-size:21.70px;color:#1a1b25"><i class="bl"></i>£4,867.70</div>
<div class="t" id="mrr_cmp" style="left:317.20px;top:650.00px;font-size:17.68px;color:#687385"><i class="bl"></i>£4,146.97</div>
<div class="t" id="mrr_nov8" style="left:79.20px;top:780.00px;font-size:14.30px;color:#687385"><i class="bl"></i>Nov 8</div>
<div class="t" id="mrr_todayax" style="left:359.20px;top:781.00px;font-size:13.55px;color:#687385"><i class="bl"></i>Today</div>
<div class="t" id="nv_title" style="left:438.00px;top:621.00px;font-size:16.16px;color:#414552;-webkit-text-stroke:0.3px #414552"><i class="bl"></i>Net volume from sales</div>
<div class="t" id="nv_badge" style="left:638.40px;top:621.00px;font-size:14.09px;color:#05690d;-webkit-text-stroke:0.3px #05690d"><i class="bl"></i>42.2%</div>
<div class="t" id="nv_val" style="left:439.00px;top:648.00px;font-size:21.29px;color:#1a1b25"><i class="bl"></i>£18,491.55</div>
<div class="t" id="nv_cmp" style="left:667.80px;top:650.00px;font-size:17.20px;color:#687385"><i class="bl"></i>£13,003.51</div>
<div class="t" id="nv_nov8" style="left:438.00px;top:780.00px;font-size:14.25px;color:#687385"><i class="bl"></i>Nov 8</div>
<div class="t" id="nv_todayax" style="left:718.00px;top:781.00px;font-size:13.52px;color:#687385"><i class="bl"></i>Today</div>
<div class="t" id="nc_title" style="left:797.80px;top:621.00px;font-size:16.35px;color:#414552;-webkit-text-stroke:0.3px #414552"><i class="bl"></i>New customers</div>
<div class="t" id="nc_badge" style="left:947.20px;top:622.00px;font-size:13.13px;color:#05690d;-webkit-text-stroke:0.3px #05690d"><i class="bl"></i>17.6%</div>
<div class="t" id="nc_val" style="left:797.80px;top:648.00px;font-size:23.75px;color:#1a1b25"><i class="bl"></i>80</div>
<div class="t" id="nc_cmp" style="left:1091.80px;top:650.00px;font-size:19.90px;color:#687385"><i class="bl"></i>68</div>
<div class="t" id="nc_nov8" style="left:797.80px;top:780.00px;font-size:14.29px;color:#687385"><i class="bl"></i>Nov 8</div>
<div class="t" id="nc_todayax" style="left:1077.80px;top:781.00px;font-size:13.52px;color:#687385"><i class="bl"></i>Today</div>
<div class="t" id="gv_title" style="left:1157.60px;top:622.00px;font-size:15.71px;color:#414552;-webkit-text-stroke:0.3px #414552"><i class="bl"></i>Gross volume</div>
<div class="t" id="gv_badge" style="left:1271.60px;top:622.00px;font-size:13.38px;color:#05690d;-webkit-text-stroke:0.3px #05690d"><i class="bl"></i>41.5%</div>
<div class="t" id="gv_val" style="left:1157.60px;top:648.00px;font-size:21.94px;color:#1a1b25"><i class="bl"></i>£19,660.83</div>
<div class="t" id="gv_cmp" style="left:1383.40px;top:650.00px;font-size:17.72px;color:#687385"><i class="bl"></i>£13,890.47</div>
<div class="t" id="gv_nov8" style="left:1156.60px;top:780.00px;font-size:14.27px;color:#687385"><i class="bl"></i>Nov 8</div>
<div class="t" id="gv_todayax" style="left:1436.60px;top:781.00px;font-size:13.52px;color:#687385"><i class="bl"></i>Today</div>
<div class="t" id="sp_title" style="left:80.40px;top:845.00px;font-size:16.31px;color:#414552;-webkit-text-stroke:0.3px #414552"><i class="bl"></i>Successful payments</div>
<div class="t" id="sp_badge" style="left:250.20px;top:845.00px;font-size:14.10px;color:#05690d;-webkit-text-stroke:0.3px #05690d"><i class="bl"></i>6.5%</div>
<div class="t" id="sp_val" style="left:80.40px;top:870.00px;font-size:22.65px;color:#1a1b25"><i class="bl"></i>422</div>
<div class="t" id="sp_cmp" style="left:363.20px;top:873.00px;font-size:19.54px;color:#687385"><i class="bl"></i>396</div>
<div class="t" id="as_title" style="left:439.00px;top:845.00px;font-size:16.41px;color:#414552;-webkit-text-stroke:0.3px #414552"><i class="bl"></i>Active subscribers</div>
<div class="t" id="as_badge" style="left:611.40px;top:845.00px;font-size:14.09px;color:#05690d;-webkit-text-stroke:0.3px #05690d"><i class="bl"></i>9.0%</div>
<div class="t" id="as_val" style="left:438.00px;top:871.00px;font-size:21.91px;color:#1a1b25"><i class="bl"></i>133</div>
<div class="t" id="as_cmp" style="left:726.00px;top:874.00px;font-size:17.04px;color:#687385"><i class="bl"></i>122</div>
<div class="t" id="slv_title" style="left:798.40px;top:845.00px;font-size:16.47px;color:#414552;-webkit-text-stroke:0.3px #414552"><i class="bl"></i>Subscriber lifetime value</div>
<div class="t" id="slv_badge" style="left:1015.00px;top:845.00px;font-size:14.11px;color:#05690d;-webkit-text-stroke:0.3px #05690d"><i class="bl"></i>28.0%</div>
<div class="t" id="slv_val" style="left:798.40px;top:871.00px;font-size:22.51px;color:#1a1b25"><i class="bl"></i>£322.93</div>
<div class="t" id="slv_cmp" style="left:1047.20px;top:873.00px;font-size:18.38px;color:#687385"><i class="bl"></i>£252.25</div>
<div class="t" id="ns_title" style="left:1156.60px;top:846.00px;font-size:16.52px;color:#414552;-webkit-text-stroke:0.3px #414552"><i class="bl"></i>New subscribers</div>
<div class="t" id="ns_badge" style="left:1316.00px;top:845.00px;font-size:14.27px;color:#05690d;-webkit-text-stroke:0.3px #05690d"><i class="bl"></i>4.4%</div>
<div class="t" id="ns_val" style="left:1157.60px;top:871.00px;font-size:22.28px;color:#1a1b25"><i class="bl"></i>47</div>
<div class="t" id="ns_cmp" style="left:1451.80px;top:873.00px;font-size:18.12px;color:#687385"><i class="bl"></i>45</div>
<div class="t" id="goals" style="left:1575.80px;top:114.00px;font-size:15.55px;color:#fff"><i class="bl"></i>Goals</div>
<div class="t" id="ygp" style="left:1541.60px;top:169.00px;font-size:21.00px;color:#353a44;font-weight:bold"><i class="bl"></i>Your Goal Progress</div>
<div class="t" id="keep" style="left:1540.60px;top:203.00px;font-size:17.68px;color:#687385"><i class="bl"></i>Keep track of your MRR goal.</div>
<div class="t" id="mrrgoal" style="left:1540.60px;top:262.00px;font-size:17.22px;color:#353a44;font-weight:bold"><i class="bl"></i>MRR Goal</div>
<div class="t" id="g4867" style="left:1651.40px;top:326.00px;font-size:15.68px;color:#414552"><i class="bl"></i>£4,867.70 /</div>
<div class="t" id="g5000" style="left:1735.00px;top:325.00px;font-size:19.88px;color:#30313d;font-weight:bold"><i class="bl"></i>£5,000</div>
<div class="t" id="g973" style="left:1801.00px;top:326.00px;font-size:15.78px;color:#687385"><i class="bl"></i>(97.3%)</div>
<div class="t" id="didyour" style="left:1540.60px;top:376.00px;font-size:16.00px;color:#414552"><i class="bl"></i>Did your goal change? Update it in settings.</div>
</div>
<div style="position:absolute;left:0;top:0;width:4px;height:981px;background:#000"></div>
<div style="position:absolute;left:0;top:980px;width:1917px;height:1px;background:repeating-linear-gradient(90deg,#9a9a9a 0 2px,#000 2px 5px,#bdbdbd 5px 6px,#000 6px 9px,#8a8a8a 9px 11px,#000 11px 16px)"></div>
<div style="position:absolute;left:0;top:979px;width:1917px;height:1px;background:repeating-linear-gradient(90deg,#2a2a2a 0 1px,#000 1px 4px,#333 4px 5px,#000 5px 13px)"></div>
</body></html>
